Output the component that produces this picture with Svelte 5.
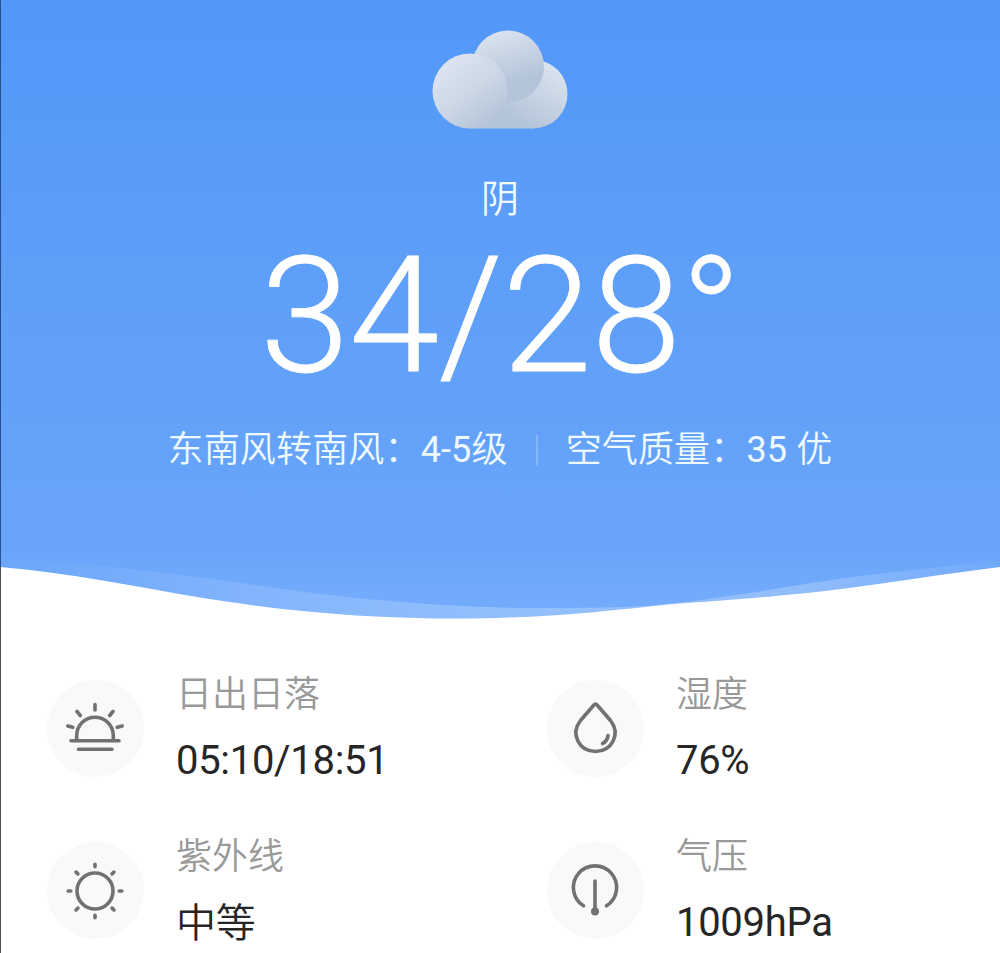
<script>
  const weather = {
    text: '阴',
    temp: '34/28°',
    wind: '东南风转南风：',
    windLevel: '4-5级',
    air: '空气质量：',
    airLevel: '35 优'
  };

  const items = [
    { icon: 'sunrise', label: '日出日落', value: '05:10/18:51' },
    { icon: 'drop', label: '湿度', value: '76%' },
    { icon: 'sun', label: '紫外线', value: '中等', cn: true },
    { icon: 'gauge', label: '气压', value: '1009hPa' }
  ];

  const rays = [0, 45, 90, 135, 180, 225, 270, 315];
</script>

<div class="page">
  <header class="hero">
    <svg class="cloud" width="136" height="99" viewBox="0 0 136 99">
      <defs>
        <linearGradient id="c-left" x1="0.2" y1="0.05" x2="0.85" y2="0.9">
          <stop offset="0" stop-color="#dde5f0" />
          <stop offset="0.5" stop-color="#cdd8e6" />
          <stop offset="1" stop-color="#b3c3d8" />
        </linearGradient>
        <linearGradient id="c-top" x1="0.3" y1="0" x2="0.6" y2="1">
          <stop offset="0" stop-color="#dce4ef" />
          <stop offset="0.75" stop-color="#b3c4d9" />
          <stop offset="1" stop-color="#b5c5d9" />
        </linearGradient>
        <linearGradient id="c-right" x1="0.85" y1="0.1" x2="0.35" y2="0.9">
          <stop offset="0" stop-color="#dbe4f0" />
          <stop offset="1" stop-color="#b5c5d9" />
        </linearGradient>
      </defs>
      <path d="M38 98.500 V70 H101 V98.500 Z" fill="#b5c5d9" />
      <circle cx="101" cy="64" r="34.5" fill="url(#c-right)" />
      <circle cx="76" cy="36.5" r="36" fill="url(#c-top)" />
      <circle cx="38" cy="61" r="37.5" fill="url(#c-left)" />
    </svg>
    <div class="text">{weather.text}</div>
    <div class="temp">{weather.temp}</div>
    <div class="summary">
      <span>{weather.wind}<b>{weather.windLevel.slice(0, 3)}</b>{weather.windLevel.slice(3)}</span>
      <i class="divider"></i>
      <span>{weather.air}<b>{weather.airLevel.slice(0, 3)}</b>{weather.airLevel.slice(3)}</span>
    </div>
  </header>

  <svg class="wave" width="1000" height="80" viewBox="0 0 1000 80">
    <defs>
      <linearGradient id="w-back" x1="0" y1="0" x2="1" y2="0">
        <stop offset="0" stop-color="#6ba6fa" />
        <stop offset="0.25" stop-color="#83b4fc" />
        <stop offset="0.5" stop-color="#93bffd" />
        <stop offset="0.8" stop-color="#92bdfb" />
        <stop offset="1" stop-color="#70a9fa" />
      </linearGradient>
      <linearGradient id="w-front" x1="0" y1="0" x2="0" y2="1">
        <stop offset="0" stop-color="#69a5fa" />
        <stop offset="0.8" stop-color="#73abfc" />
      </linearGradient>
    </defs>
    <path fill="url(#w-back)" d="M0 0 V17 C70 23 133 36 200 47.500 C290 62 370 68.500 460 68.500 C540 68.500 610 61 667 54.500 C735 50 790 45 825 41 C890 33 950 23 1000 17 V0 Z" />
    <path fill="url(#w-front)" d="M0 0 V9 C90 13 180 24 265 36.500 C350 49 450 58 540 58 C600 58 640 57 667 54 C740 46 800 34 860 26 C910 20 960 15 1000 11 V0 Z" />
  </svg>

  <section class="grid">
    {#each items as item}
      <div class="item">
        <div class="badge">
          <svg width="96" height="96" viewBox="0 0 96 96">
            {#if item.icon === 'sunrise'}
              <path d="M29.700 60 V55.500 A18.300 18.300 0 0 1 66.300 55.500 V60" />
              <path d="M24 60.800 H72 M31.500 69.300 H65" />
              <path d="M48 24.500 V30 M30 31.500 L33.300 35.500 M66 31.500 L62.700 35.500 M20.800 46 L25.800 47.300 M75.200 46 L70.200 47.300" />
            {:else if item.icon === 'drop'}
              <path d="M46.500 25.500 Q48.500 22.500 50.500 25.500 L63.500 40.500 C74 54 65 71.500 48.500 71.500 C32 71.500 23 54 33.500 40.500 Z" />
              <path d="M61 55.500 Q60.500 61 55.500 63.500" />
            {:else if item.icon === 'sun'}
              <circle cx="48" cy="49" r="18" />
              {#each rays as deg}
                <path d="M48 22.200 V24.800" transform="rotate({deg} 48 49)" />
              {/each}
            {:else}
              <path d="M36.500 63.800 A21.600 21.600 0 1 1 59.500 63.800" />
              <path d="M48 39 V68" />
              <circle class="dot" cx="48" cy="69.500" r="4" />
            {/if}
          </svg>
        </div>
        <div class="info">
          <div class="label">{item.label}</div>
          <div class="value" class:cn={item.cn}>{item.value}</div>
        </div>
      </div>
    {/each}
  </section>
</div>

<style>
  :global(body) {
    margin: 0;
    overflow: hidden;
    background: #fff;
  }

  .page {
    position: relative;
    box-sizing: border-box;
    width: 1000px;
    height: 953px;
    overflow: hidden;
    font-family: Roboto, 'Noto Sans CJK SC', sans-serif;
    background: #fff;
  }

  /* thin edge down the left side */
  .page::after {
    content: '';
    position: absolute;
    top: 0;
    left: 0;
    width: 1px;
    height: 100%;
    background: linear-gradient(#24518f 567px, #505050 567px);
  }

  .hero {
    box-sizing: border-box;
    display: flex;
    flex-direction: column;
    align-items: center;
    height: 550px;
    padding-top: 30px;
    color: #fff;
    background: linear-gradient(#5298f8, #69a5fa);
  }

  .cloud {
    display: block;
  }

  .text {
    margin-top: 45px;
    font-size: 38px;
    font-weight: 350;
    line-height: 50px;
    color: #f0fbff;
  }

  .temp {
    margin-top: 11px;
    padding-left: 1px;
    font-size: 162px;
    font-weight: 300;
    line-height: 162px;
    letter-spacing: -0.7px;
    white-space: nowrap;
    -webkit-text-stroke: 0.8px #fff;
  }

  .summary {
    display: flex;
    align-items: center;
    margin-top: 28px;
    font-size: 36px;
    font-weight: 350;
    line-height: 50px;
    letter-spacing: 0.15px;
    white-space: nowrap;
    color: #eefaff;
  }

  .summary b {
    font-weight: 400;
  }

  .divider {
    width: 2px;
    height: 31px;
    margin: 0 28px;
    background: #85b6fc;
  }

  .wave {
    display: block;
  }

  .grid {
    display: grid;
    grid-template-columns: 500px 500px;
    grid-auto-rows: 162px;
    padding-top: 17px;
  }

  .item {
    display: flex;
    align-items: center;
    height: 162px;
    padding-left: 47px;
  }

  .badge {
    width: 97px;
    height: 97px;
    border-radius: 50%;
    background: #f8f9fb;
  }

  .badge svg {
    display: block;
    fill: none;
    stroke: #707173;
    stroke-width: 3.6;
    stroke-linecap: round;
    stroke-linejoin: round;
  }

  .badge .dot {
    fill: #707173;
    stroke: none;
  }

  .info {
    margin-left: 32px;
  }

  .label {
    font-size: 36px;
    font-weight: 350;
    line-height: 50px;
    color: #999;
  }

  .value {
    margin-top: 15px;
    font-size: 40px;
    line-height: 52px;
    letter-spacing: -0.3px;
    color: #262626;
  }

  .value.cn {
    padding-top: 1px;
    margin-bottom: -1px;
    font-weight: 350;
  }
</style>
